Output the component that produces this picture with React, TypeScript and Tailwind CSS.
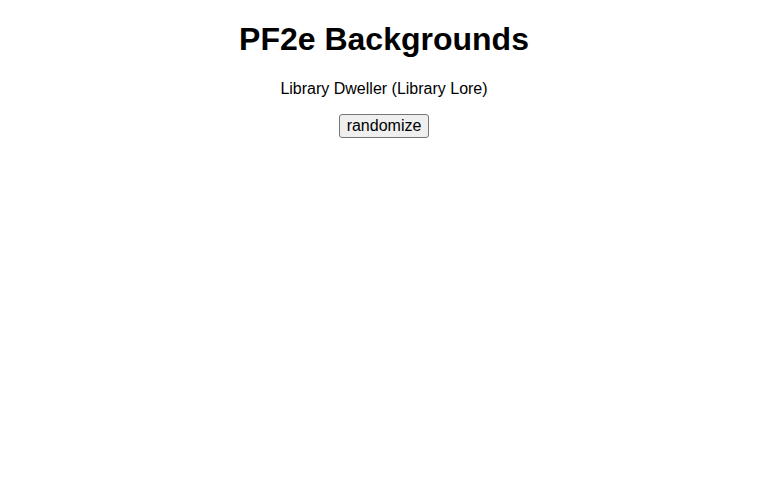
import { useState } from 'react';

const BACKGROUNDS = [
  { name: 'Library Dweller', lore: 'Library Lore' },
  { name: 'Acolyte', lore: 'Scribing Lore' },
  { name: 'Farmhand', lore: 'Farming Lore' },
  { name: 'Scholar', lore: 'Academia Lore' },
];

export default function App() {
  const [index, setIndex] = useState(0);
  const current = BACKGROUNDS[index];

  const randomize = () => {
    setIndex(Math.floor(Math.random() * BACKGROUNDS.length));
  };

  return (
    <div className="flex min-h-[480px] flex-col items-center bg-white font-['Liberation_Sans',Arial,sans-serif] text-black">
      <h1 className="mt-[21.44px] text-[32px] leading-[36.8px] font-bold">PF2e Backgrounds</h1>
      <p className="mt-[21.44px] text-base leading-[18.4px]">
        {current.name} ({current.lore})
      </p>
      <button
        onClick={randomize}
        className="mt-4 rounded-[3px] border border-[#767676] bg-[#efefef] px-[7px] py-[2px] text-base leading-[18.4px] hover:bg-[#e5e5e5]"
      >
        randomize
      </button>
    </div>
  );
}
